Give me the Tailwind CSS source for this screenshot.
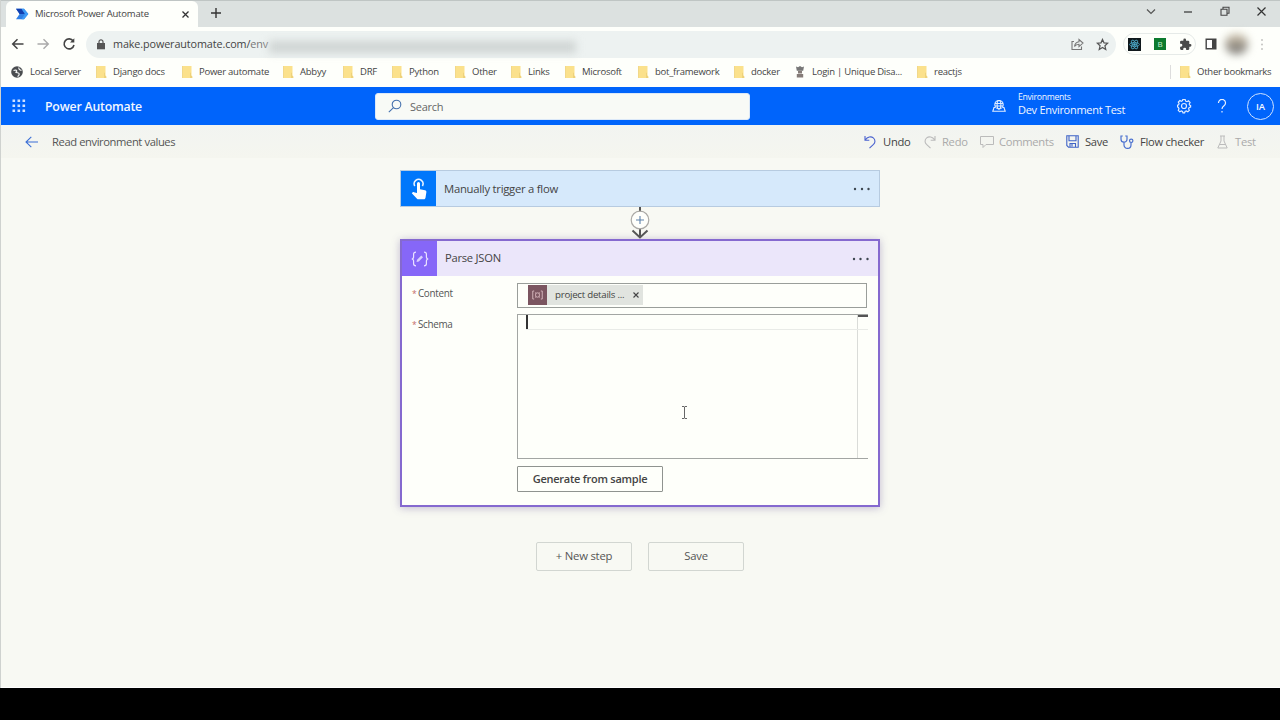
<!DOCTYPE html>
<html lang="en">
  <head>
    <meta charset="UTF-8" />
    <meta name="viewport" content="width=device-width, initial-scale=1.0" />
    <script src="https://cdn.jsdelivr.net/npm/@tailwindcss/browser@4"></script>
    <title>Microsoft Power Automate</title>
  </head>
  <body class="w-[1280px] h-[720px] overflow-hidden bg-black font-['Open_Sans','Noto_Sans',sans-serif] text-[#444] whitespace-nowrap">
    <svg class="hidden">
      <symbol id="folder" viewBox="0 0 12 14">
        <path d="M1.500 1h9v9.500l.8 1V13H1.500z" fill="#fbe18c" />
        <path d="M10 7.500v3l1.200 1V13H9V8z" fill="#eed27a" />
        <path d="M1 1h1v12H1z" fill="#f1d88a" />
      </symbol>
      <symbol id="plug" viewBox="0 0 12 14">
        <path d="M2 1.500l2 .8 2-1.300 2 1.300 2-.8-.8 4.300H2.800z" fill="#777" />
        <path d="M4 5.800h4v2.700H4zM2.800 9h6.400v3.500H2.800z" fill="#857c78" />
      </symbol>
    </svg>

    <div class="relative w-full h-[688px] flex flex-col bg-[#f8f9f3]">
      <div class="absolute left-0 top-0 z-20 w-px h-full bg-[#cfd2cf]"></div>
      <!-- Tab strip -->
      <div class="h-[27px] shrink-0 flex bg-[#dce1e0] border-t border-[#bfc5c4]">
        <div class="ml-[6px] w-[192px] h-full flex items-center bg-[#fefffb] rounded-t-md pl-[9px] pr-2">
          <svg class="w-[14px] h-3" viewBox="0 0 14 12">
            <path d="M1 .8h8L13.300 6 9 11.200H1L4.600 6z" fill="#2f7fe6" />
            <path d="M1 .8h5.500L10 6H4.600z" fill="#123fae" />
            <path d="M9 .8L13.300 6 9 11.200 6.500 11.200 10 6 6.500.8z" fill="#3d9bf5" />
          </svg>
          <span class="ml-[6px] text-[9.500px] tracking-[-0.2px]">Microsoft Power Automate</span>
          <svg class="ml-auto w-[9px] h-[9px]" viewBox="0 0 9 9" stroke="#333" stroke-width="1.300"><path d="M1.500 1.500l6 6M7.500 1.500l-6 6" /></svg>
        </div>
        <svg class="ml-3 mt-[6px] w-3 h-3" viewBox="0 0 12 12" stroke="#333" stroke-width="1.400"><path d="M6 1v10M1 6h10" /></svg>
        <div class="ml-auto mr-[12px] mt-1 h-3 flex gap-[25px]">
          <svg class="w-3 h-3" viewBox="0 0 12 12" fill="none" stroke="#555" stroke-width="1.200"><path d="M2 4.500l4 4 4-4" /></svg>
          <svg class="w-3 h-3" viewBox="0 0 12 12" stroke="#333" stroke-width="1.200"><path d="M2 7h8" /></svg>
          <svg class="w-3 h-3" viewBox="0 0 12 12" fill="none" stroke="#444" stroke-width="1.100"><path d="M2 4.200h6v6H2zM4 4V2.200h6v6H8" /></svg>
          <svg class="w-3 h-3" viewBox="0 0 12 12" stroke="#333" stroke-width="1.200"><path d="M1.500 2.500l8 8M9.500 2.500l-8 8" /></svg>
        </div>
      </div>

      <!-- Address bar -->
      <div class="h-[34px] shrink-0 flex items-center bg-[#fefffb] pl-[11px]">
        <svg class="w-[14px] h-[14px]" viewBox="0 0 14 14" fill="none" stroke="#444" stroke-width="1.500"><path d="M12.500 7H2M6.500 2.200L1.700 7l4.800 4.800" /></svg>
        <svg class="ml-[11px] w-[14px] h-[14px]" viewBox="0 0 14 14" fill="none" stroke="#aaa" stroke-width="1.400"><path d="M1.500 7H12M7.500 2.200L12.300 7l-4.800 4.800" /></svg>
        <svg class="ml-3 w-[14px] h-[14px]" viewBox="0 0 14 14" fill="none" stroke="#444" stroke-width="1.600"><path d="M11.200 4A5 5 0 1 0 12 8" /><path d="M12.300 1.200v4.300H8z" fill="#444" stroke="none" /></svg>
        <div class="relative ml-[10px] w-[1030px] h-[27px] rounded-full bg-[#edf2f1] flex items-center pl-[11px] pr-[7px]">
          <svg class="w-2 h-[11px]" viewBox="0 0 8 11"><path d="M0 4h8v6.300H0z" fill="#555" /><path d="M2 4.500V2.800a2 2 0 0 1 4 0v1.700" fill="none" stroke="#555" stroke-width="1.200" /></svg>
          <span class="ml-[8px] text-[10.800px] tracking-[-0.11px] text-[#444]">make.powerautomate.com/<span class="text-[#777]">env</span></span>
          <div class="absolute left-[183px] top-[10px] w-[307px] h-[12px] bg-[#cfd4d3] blur-[4px]"></div>
          <svg class="ml-auto w-[14px] h-[14px]" viewBox="0 0 14 14" fill="none" stroke="#777" stroke-width="1.100"><path d="M4 4.500H2v8h9.500V9.500" /><path d="M4.500 9.500C5 6.300 6.800 5 9 4.800V2.500l4 3.600-4 3.500V7.200c-2 0-3.500.7-4.500 2.300z" /></svg>
          <svg class="ml-3 w-[13px] h-[13px]" viewBox="0 0 14 14" fill="none" stroke="#555" stroke-width="1.300"><path d="M7 1.500l1.600 3.700 4 .4-3 2.700.9 4L7 10.200l-3.500 2.100.9-4-3-2.700 4-.4z" /></svg>
        </div>
        <div class="ml-[7px] w-[73px] h-[22px] rounded-full border border-[#e6eae8] flex items-center pl-1">
          <svg class="w-[13px] h-[13px]" viewBox="0 0 13 13" fill="none" stroke="#4ba8c8" stroke-width=".8">
            <path d="M0 0h13v13H0z" fill="#10181c" stroke="none" />
            <ellipse cx="6.500" cy="6.500" rx="5" ry="2" /><ellipse cx="6.500" cy="6.500" rx="5" ry="2" transform="rotate(60 6.500 6.500)" /><ellipse cx="6.500" cy="6.500" rx="5" ry="2" transform="rotate(120 6.500 6.500)" />
            <circle cx="6.500" cy="6.500" r="1" fill="#4ba8c8" />
          </svg>
          <span class="ml-[13px] w-3 h-3 bg-[#0c7a2e] text-[#c9ecd0] text-[8px] leading-3 text-center">B</span>
          <svg class="ml-[13px] w-[13px] h-[13px]" viewBox="0 0 24 24" fill="#4a4a4a"><path d="M20.500 11H19V7a2 2 0 0 0-2-2h-4V3.500a2.500 2.500 0 0 0-5 0V5H4a2 2 0 0 0-2 2v3.800h1.500a2.700 2.700 0 0 1 0 5.400H2V20a2 2 0 0 0 2 2h3.800v-1.500a2.700 2.700 0 0 1 5.400 0V22H17a2 2 0 0 0 2-2v-4h1.500a2.500 2.500 0 0 0 0-5z" /></svg>
        </div>
        <svg class="ml-[9px] w-3 h-3" viewBox="0 0 12 12"><path d="M1.200 1.200h9.600v9.600H1.200z" fill="#fff" stroke="#444" stroke-width="1.400" /><path d="M7 1h4v10H7z" fill="#444" /></svg>
        <div class="ml-[8px] w-[23px] h-[20px] rounded-full bg-linear-to-b from-[#d3c6ae] to-[#6f6e6c] blur-[4px]"></div>
        <svg class="ml-[12px] w-1 h-[14px]" viewBox="0 0 4 14" fill="#c4c4c2"><circle cx="2" cy="3" r="1" /><circle cx="2" cy="7.500" r="1" /><circle cx="2" cy="12" r="1" /></svg>
      </div>

      <!-- Bookmarks -->
      <div class="h-[26px] shrink-0 flex items-center bg-[#fefffb] pl-[11px] pb-[4px] text-[9.500px] tracking-[-0.24px] [&_svg]:w-3 [&_svg]:h-[14px] [&_svg]:mr-[6px] [&_svg]:shrink-0">
        <a class="w-[84px] flex items-center">
          <svg viewBox="0 0 12 14"><circle cx="6" cy="7" r="5.800" fill="#4a4d50" /><path d="M2.500 5.500c2-.8 3.500-.3 3.200.8S4 7 5.500 7.500s3 .3 2.700 1.800-1.200 1.900-1.700 2.200M8 2.500c-.6 1.500.5 2.500 2.500 2.900" fill="none" stroke="#f2f4f2" stroke-width="1.200" /></svg><span class="ml-px">Local Server</span>
        </a>
        <a class="w-[86px] flex items-center"><svg><use href="#folder" /></svg>Django docs</a>
        <a class="w-[101px] flex items-center"><svg><use href="#folder" /></svg>Power automate</a>
        <a class="w-[60px] flex items-center"><svg><use href="#folder" /></svg>Abbyy</a>
        <a class="w-[49px] flex items-center"><svg><use href="#folder" /></svg>DRF</a>
        <a class="w-[63px] flex items-center"><svg><use href="#folder" /></svg>Python</a>
        <a class="w-[56px] flex items-center"><svg><use href="#folder" /></svg>Other</a>
        <a class="w-[54px] flex items-center"><svg><use href="#folder" /></svg>Links</a>
        <a class="w-[73px] flex items-center"><svg><use href="#folder" /></svg>Microsoft</a>
        <a class="w-[96px] flex items-center"><svg><use href="#folder" /></svg>bot_framework</a>
        <a class="w-[61px] flex items-center"><svg><use href="#folder" /></svg>docker</a>
        <a class="w-[122px] flex items-center"><svg><use href="#plug" /></svg>Login | Unique Disa...</a>
        <a class="flex items-center"><svg><use href="#folder" /></svg>reactjs</a>
        <a class="ml-auto w-[110px] flex items-center border-l border-[#ddd] pl-2"><svg><use href="#folder" /></svg>Other bookmarks</a>
      </div>

      <!-- App header -->
      <header class="h-[38px] shrink-0 flex items-center bg-[#0064fb] text-[#f2f7ff] pl-[12px]">
        <svg class="w-[14px] h-[14px]" viewBox="0 0 14 14" fill="#cfe2ff">
          <path d="M.5.5h2.600v2.600H.5zM5.500.5h2.600v2.600H5.500zM10.500.5h2.600v2.600h-2.600zM.5 5.500h2.600v2.600H.5zM5.500 5.500h2.600v2.600H5.500zM10.500 5.500h2.600v2.600h-2.600zM.5 10.500h2.600v2.600H.5zM5.500 10.500h2.600v2.600H5.500zM10.500 10.500h2.600v2.600h-2.600z" />
        </svg>
        <h1 class="ml-[19px] w-[330px] pt-[2px] text-[12.300px] font-semibold tracking-[-0.2px]">Power Automate</h1>
        <div class="w-[375px] h-[27px] rounded-[3px] bg-[#f8faf6] border border-[#dbe8f8] flex items-center pl-3 text-[#666]">
          <svg class="w-[14px] h-[14px]" viewBox="0 0 14 14" fill="none" stroke="#4470ad" stroke-width="1.100"><circle cx="8.500" cy="5.500" r="4.300" /><path d="M5.500 8.600L.8 13.200" /></svg>
          <span class="ml-2 pt-[2px] text-[11px] tracking-[-0.25px]">Search</span>
        </div>
        <div class="ml-auto mr-[6px] flex items-center">
          <svg class="w-[14px] h-[14px]" viewBox="0 0 14 14" fill="none" stroke="#e1edff" stroke-width="1.100"><circle cx="7" cy="5.700" r="4.200" /><ellipse cx="7" cy="5.700" rx="1.900" ry="4.200" /><path d="M3 4.500h8M3 7h8M3 8.500H2L.8 12.300h12.400L12 8.500h-1" /></svg>
          <div class="ml-[12px] w-[158px] pb-1 flex flex-col">
            <span class="text-[8.700px] leading-3 tracking-[-0.3px]">Environments</span>
            <span class="text-[11px] leading-[14px] tracking-[-0.28px] font-medium">Dev Environment Test</span>
          </div>
          <svg class="w-4 h-4" viewBox="0 0 16 16" fill="none" stroke="#dfebff" stroke-width="1.200"><path d="M6.800 1.500h2.400l.4 1.600 1.400.6 1.500-.9 1.600 1.700-.9 1.500.6 1.200.8.300v1.500l-1.400.5-.6 1.300.7 1.500-1.500 1.500-1.500-.8-1.200.5-.5 1.400H7l-.5-1.400-1.200-.5-1.500.8-1.500-1.500.7-1.500L2.400 9.500 1.600 9V7.200l1-.4.5-1.300-.8-1.400 1.600-1.600 1.400.8 1.200-.6z" /><circle cx="8" cy="8" r="2.500" /></svg>
          <svg class="ml-[25px] w-[10px] h-[14px]" viewBox="0 0 10 14" fill="none" stroke="#e8f1ff" stroke-width="1.200"><path d="M1.500 4a3.500 3.500 0 1 1 5.500 2.700C5.500 7.800 5 8.500 5 10M5 12v1.500" /></svg>
          <div class="ml-[20px] w-[27px] h-[27px] rounded-full border border-[#cfe2ff] pt-[2px] text-[9.500px] font-semibold flex items-center justify-center">IA</div>
        </div>
      </header>

      <!-- Command bar -->
      <div class="h-[33px] shrink-0 flex items-center bg-linear-to-b from-[#f2f4f1] to-[#f5f6ef] pl-[25px] pr-[26px] pt-px text-[11.200px] tracking-[-0.28px]">
        <svg class="w-[13px] h-[12px]" viewBox="0 0 13 12" fill="none" stroke="#3b6fd6" stroke-width="1.100"><path d="M13 6H1M6.300.8L1 6l5.300 5.200" /></svg>
        <span class="ml-[14px] pt-px text-[11.200px] tracking-[-0.4px] text-[#555]">Read environment values</span>
        <div class="ml-auto flex items-center">
          <button class="w-[60px] flex items-center"><svg class="w-3 h-[14px] mr-[7px]" viewBox="0 0 12 14" fill="none" stroke="#4a62cf" stroke-width="1.100"><path d="M1 1v4.300h4.300M1.200 5C3.500 1.800 7 1 9.300 2.900s2 4.600.2 6.500L5.500 13.200" /></svg>Undo</button>
          <button class="w-[56px] flex items-center text-[#aaa]"><svg class="w-3 h-[14px] mr-[6px]" viewBox="0 0 12 14" fill="none" stroke="#bbb" stroke-width="1.100"><path d="M11 1v4.300H6.700M10.800 5C8.500 1.800 5 1 2.700 2.900s-2 4.600-.2 6.500L6.500 13.200" /></svg>Redo</button>
          <button class="w-[86px] flex items-center text-[#aaa]"><svg class="w-[14px] h-[13px] mr-[5px]" viewBox="0 0 14 13" fill="none" stroke="#bbb"><path d="M.5 1.500h13v8H6l-3 3v-3H.5z" /></svg>Comments</button>
          <button class="w-[54px] flex items-center"><svg class="w-[13px] h-[13px] mr-[6px]" viewBox="0 0 13 13" fill="none" stroke="#3f63c6" stroke-width="1.100"><path d="M.8.8h11.400v11.400H2.500L.8 10.500zM3 .8v5h7v-5M4 12V8.500h5.500V12M6 9v2.500" /></svg>Save</button>
          <button class="w-[97px] flex items-center"><svg class="w-[14px] h-[14px] mr-[6px]" viewBox="0 0 14 14" fill="none" stroke="#4a70cf" stroke-width="1.200"><path d="M2.800 1H1v3.200a3 3 0 0 0 6 0V1H5.200M4 7.500v2.300a3.500 3.500 0 0 0 7 .2V7.500" /><circle cx="11.200" cy="5.800" r="1.700" /></svg>Flow checker</button>
          <button class="w-[37px] flex items-center text-[#aaa]"><svg class="w-[11px] h-[14px] mr-[7px] shrink-0" viewBox="0 0 11 14" fill="none" stroke="#bbb"><path d="M3 1h5M4 1v5L.8 13h9.400L7 6V1M2.500 9.500h6" /></svg>Test</button>
        </div>
      </div>

      <!-- Designer canvas -->
      <main class="flex-1 flex flex-col items-center pt-3 border-b border-white">
        <div class="w-[480px] h-[37px] flex items-center bg-[#d6e9fb] border border-[#b7cbe0]">
          <div class="w-[35px] h-full bg-[#0077fb] flex items-center justify-center">
            <svg class="w-[18px] h-[22px]" viewBox="0 0 18 22"><path d="M4.800 8a4.400 4.400 0 1 1 7.600 0" fill="none" stroke="#e9f4ff" stroke-width="1.500" /><path d="M7 5.500a1.500 1.500 0 0 1 3 0v5.700l5 1c1 .2 1.500.9 1.400 1.900l-.9 5.700c-.1.900-.7 1.500-1.600 1.500H8.300c-.5 0-1-.2-1.300-.6L1.800 15.300l.7-.8c.4-.4.9-.5 1.400-.3L7 15z" fill="#fff" /></svg>
          </div>
          <span class="ml-2 pt-[2px] text-[11.300px] tracking-[-0.26px]">Manually trigger a flow</span>
          <svg class="ml-auto mr-[8px] w-[18px] h-1" viewBox="0 0 18 4" fill="#3d4650"><circle cx="2" cy="2" r="1.200" /><circle cx="9" cy="2" r="1.200" /><circle cx="15.500" cy="2" r="1.200" /></svg>
        </div>

        <svg class="w-6 h-8 z-10" viewBox="0 0 24 32" fill="none">
          <path d="M12 0v31M4.500 23.500L12 30.500l7.500-7" stroke="#555" stroke-width="2" />
          <circle cx="12" cy="13" r="8.800" fill="#fefffb" stroke="#aaa9a5" stroke-width="1.200" />
          <path d="M12 9v8M8 13h8" stroke="#5f83ac" stroke-width="1.100" />
        </svg>

        <div class="w-[480px] h-[268px] border-2 border-[#8569cf] bg-[#fefffa] shadow-[0_1px_8px_rgba(90,70,140,0.35)]">
          <div class="h-[35px] flex items-center bg-[#ebe6fa]">
            <div class="w-[35px] h-full bg-[#8667f8] flex items-center justify-center">
              <svg class="w-[18px] h-[16px]" viewBox="0 0 18 16" fill="none" stroke="#e9e2ff" stroke-width="1.200"><path d="M5 1.200c-2 0-2.400.6-2.400 2v2.600C2.600 7.200 2 8 .7 8c1.300 0 1.900.8 1.900 2.200v2.600c0 1.400.4 2 2.400 2M13 1.200c2 0 2.400.6 2.400 2v2.600c0 1.400.6 2.200 1.900 2.200-1.300 0-1.900.8-1.900 2.200v2.600c0 1.400-.4 2-2.400 2" /><path d="M5.500 11l.6-2.200 4.200-4.200 1.700 1.700-4.200 4.200z" fill="#d9cfff" stroke="none" /></svg>
            </div>
            <span class="ml-2 text-[11.200px] tracking-[-0.25px]">Parse JSON</span>
            <svg class="ml-auto mr-[8px] w-[18px] h-1" viewBox="0 0 18 4" fill="#3d4650"><circle cx="2" cy="2" r="1.200" /><circle cx="8.500" cy="2" r="1.200" /><circle cx="15.500" cy="2" r="1.200" /></svg>
          </div>

          <div class="flex mt-[7px] pl-[10px]">
            <label class="w-[105px] pt-[2px] text-[9.900px] leading-4 tracking-[-0.3px] text-[#555]"><span class="mr-[1.500px] text-[8.500px] text-[#c46a66]">*</span>Content</label>
            <div class="w-[350px] h-[25px] border border-[#9a9e9a] pl-[10px] pt-px">
              <div class="w-[115px] h-[20px] flex items-center bg-[#e1e4df]">
                <svg class="w-[19px] h-[20px]" viewBox="0 0 20 20" preserveAspectRatio="none" fill="none"><path d="M0 0h20v20H0z" fill="#7b5560" /><path d="M6.500 6H5v8h1.500M13.500 6H15v8h-1.500" stroke="#d2b4ba" /><circle cx="10" cy="10" r="2.200" stroke="#d2b4ba" /><path d="M8 7v6M12 7v6" stroke="#c09aa2" stroke-width=".8" /></svg>
                <span class="ml-2 text-[9.700px] tracking-[-0.25px]">project details ...</span>
                <svg class="ml-auto mr-[3px] w-2 h-2" viewBox="0 0 8 8" stroke="#444" stroke-width="1.100"><path d="M1.500 1.500l5 5M6.500 1.500l-5 5" /></svg>
              </div>
            </div>
          </div>

          <div class="flex mt-[6px] pl-[10px]">
            <label class="w-[105px] pt-[2px] text-[9.900px] leading-4 tracking-[-0.3px] text-[#555]"><span class="mr-[1.500px] text-[8.500px] text-[#c46a66]">*</span>Schema</label>
            <div class="relative w-[351px] h-[145px] border-y border-l border-[#a3a6a3] flex">
              <div class="w-[340px] h-full border-r border-[#dadcd8] pl-2">
                <div class="w-[1.500px] h-[14px] bg-[#333]"></div>
              </div>
              <div class="w-[10px] h-[2px] bg-[#555]"></div>
              <div class="absolute left-2 right-0 top-[14px] h-px bg-[#e9ebe7]"></div>
              <svg class="absolute left-[163px] top-[91px] w-[7px] h-[13px]" viewBox="0 0 7 13" fill="none" stroke="#666"><path d="M1 .5h2l.5.5.500-.5h2M1 12.500h2l.500-.5.500.5h2M3.500 1v11" /></svg>
            </div>
          </div>

          <button class="ml-[115px] mt-[7px] w-[146px] h-[26px] block border border-[#8f938f] rounded-[1px] pb-px text-[11px] leading-[23px] tracking-[-0.25px] font-semibold">Generate from sample</button>
        </div>

        <div class="flex gap-4 mt-[35px] text-[11.300px] leading-[26px] tracking-[-0.2px] text-[#555]">
          <button class="w-[96px] h-[29px] pb-px border border-[#d2d6d1] rounded-[2px]">+ New step</button>
          <button class="w-[96px] h-[29px] pb-px border border-[#d2d6d1] rounded-[2px]">Save</button>
        </div>
      </main>
    </div>
  </body>
</html>
